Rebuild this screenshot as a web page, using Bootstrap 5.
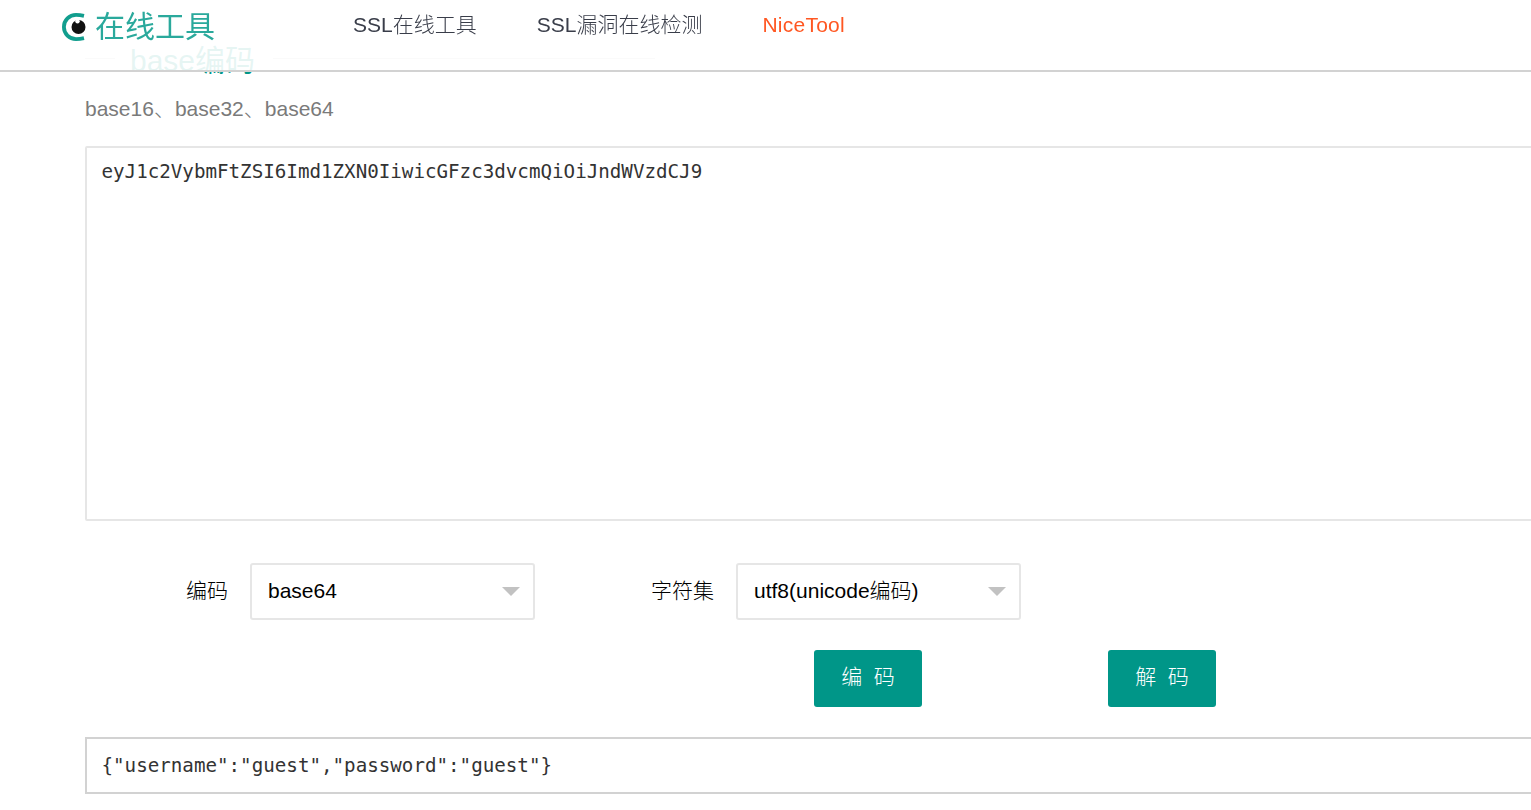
<!DOCTYPE html>
<html lang="zh-CN">
<head>
<meta charset="utf-8">
<title>base编码</title>
<link rel="stylesheet" href="https://cdn.jsdelivr.net/npm/bootstrap@5.3.0/dist/css/bootstrap.min.css">
<style>
html, body { height: 810px; overflow: hidden; }
body { font-family: "Liberation Sans", "Noto Sans CJK SC", sans-serif; font-size: 21px; color: #333; background: #fff; }
.site-head { position: fixed; top: 0; left: 0; right: 0; height: 72px; background: rgba(255,255,255,.9); border-bottom: 2px solid #d2d2d2; z-index: 10; }
.logo-box { width: 353px; padding-left: 62px; gap: 9px; height: 54px; }
.logo-word { font-size: 30px; line-height: 30px; color: #2aa99c; font-weight: 400; }
.main-menu { gap: 60px; height: 50px; }
.main-menu a { font-size: 21px; color: #393D49; text-decoration: none; font-weight: 300; }
.main-menu a.hot { color: #ff5722; letter-spacing: .25px; }
.page-main { width: 1500px; margin-left: 85px; padding-top: 42px; }
.title-line { height: 36px; width: 570px; }
.title-line::before, .title-line::after { content: ""; height: 1px; background: #c8c8c8; margin-top: -4px; }
.title-line::before { width: 30px; margin-right: 15px; }
.title-line::after { flex: 1; margin-left: 18px; }
.title-line h1 { font-size: 30px; line-height: 36px; font-weight: 400; color: #009688; margin: 0; padding-top: 1px; }
.sub-note { font-size: 21px; line-height: 30px; height: 30px; margin: 16px 0 22px; color: #7a7a7a; font-weight: 300; }
.mono-box { font-family: "DejaVu Sans Mono", monospace; font-size: 19.2px; color: #333; }
.src-area { display: block; width: 100%; height: 375px; padding: 10px 15px 10px 14.5px; border: 2px solid #e6e6e6; border-radius: 2px; line-height: 28px; resize: none; outline: 0; }
.opt-row { margin-top: 42px; padding-left: 13px; height: 57px; gap: 49px; }
.opt-field { gap: 22px; }
.opt-label { width: 130px; text-align: right; color: #000; font-weight: 300; padding-bottom: 2px; }
.opt-pick { width: 285px; height: 57px; border: 2px solid #e6e6e6; border-radius: 3px; padding: 0 16px; line-height: 51px; color: #000; font-weight: 300; }
.opt-pick::after { content: ""; position: absolute; right: 13px; top: 22px; border-style: solid; border-width: 9px 9px 0; border-color: #c2c2c2 transparent transparent; }
.act-row { margin: 30px 0 30px 729px; gap: 186px; }
.act-btn { width: 108px; height: 57px; padding: 0 0 3px; font-size: 21px; font-weight: 300; color: #fff; background: #009688; border: 0; border-radius: 3px; }
.out-box { height: 57px; padding: 0 14.5px; border: 2px solid #d2d2d2; line-height: 53px; }
</style>
</head>
<body>
<header class="site-head d-flex">
  <div class="logo-box d-flex align-items-center">
    <svg width="24" height="30" viewBox="0 0 24 30" aria-hidden="true">
      <path d="M22 3.8Q18 2.9 14 2.9A12 12 0 0 0 14 27.1Q18 27.1 22 26.2" fill="none" stroke="#129e8e" stroke-width="3.8"/>
      <circle cx="16.5" cy="15" r="7" fill="#111"/>
      <circle cx="15.5" cy="9.2" r="2.2" fill="#fff"/>
    </svg>
    <span class="logo-word">在线工具</span>
  </div>
  <nav class="main-menu d-flex align-items-center">
    <a href="#">SSL在线工具</a>
    <a href="#">SSL漏洞在线检测</a>
    <a href="#" class="hot">NiceTool</a>
  </nav>
</header>
<main class="page-main">
  <div class="title-line d-flex align-items-center"><h1>base编码</h1></div>
  <p class="sub-note">base16、base32、base64</p>
  <textarea class="src-area mono-box" spellcheck="false">eyJ1c2VybmFtZSI6Imd1ZXN0IiwicGFzc3dvcmQiOiJndWVzdCJ9</textarea>
  <div class="opt-row d-flex">
    <div class="opt-field d-flex align-items-center">
      <label class="opt-label">编码</label>
      <div class="opt-pick position-relative">base64</div>
    </div>
    <div class="opt-field d-flex align-items-center">
      <label class="opt-label">字符集</label>
      <div class="opt-pick position-relative">utf8(unicode编码)</div>
    </div>
  </div>
  <div class="act-row d-flex">
    <button type="button" class="btn act-btn">编&nbsp;&nbsp;码</button>
    <button type="button" class="btn act-btn">解&nbsp;&nbsp;码</button>
  </div>
  <div class="out-box mono-box">{"username":"guest","password":"guest"}</div>
</main>
<script src="https://cdn.jsdelivr.net/npm/bootstrap@5.3.0/dist/js/bootstrap.bundle.min.js"></script>
</body>
</html>
